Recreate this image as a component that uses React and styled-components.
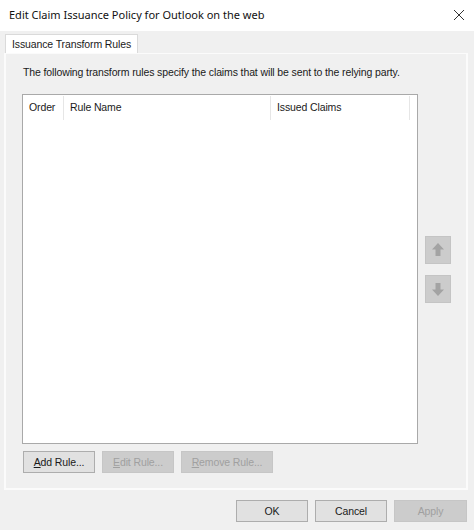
import React from "react";
import styled, { createGlobalStyle } from "styled-components";

const GlobalStyle = createGlobalStyle`
  html, body {
    margin: 0;
    padding: 0;
    background: #f0f0f0;
  }
  body {
    font-family: "Liberation Sans", Arial, sans-serif;
    color: #1a1a1a;
  }
`;

const columns = [
  { label: "Order", width: 41 },
  { label: "Rule Name", width: 207 },
  { label: "Issued Claims", width: 139 },
];

const Arrow = ({ down }) => (
  <svg width="14" height="16" viewBox="0 0 14 16">
    <polygon
      points="7,1 13,7.5 9.5,7.5 9.5,14 4.5,14 4.5,7.5 1,7.5"
      fill="#a3a3a3"
      transform={down ? "rotate(180 7 8)" : undefined}
    />
  </svg>
);

const App = () => {
  return (
    <Window>
      <GlobalStyle />
      <TitleBar>
        <Title>Edit Claim Issuance Policy for Outlook on the web</Title>
        <Close>
          <svg width="12" height="12" viewBox="0 0 12 12">
            <path d="M1 1 L11 11 M11 1 L1 11" stroke="#333" strokeWidth="1" />
          </svg>
        </Close>
      </TitleBar>
      <Body>
        <TabStrip>
          <Tab>Issuance Transform Rules</Tab>
        </TabStrip>
        <Panel>
          <Description>
            The following transform rules specify the claims that will be sent
            to the relying party.
          </Description>
          <ListRow>
            <ListBox>
              <Header>
                {columns.map((c) => (
                  <HeaderCell key={c.label} $width={c.width}>
                    {c.label}
                  </HeaderCell>
                ))}
              </Header>
            </ListBox>
            <ArrowColumn>
              <ArrowButton disabled>
                <Arrow />
              </ArrowButton>
              <ArrowButton disabled>
                <Arrow down />
              </ArrowButton>
            </ArrowColumn>
          </ListRow>
          <RuleButtons>
            <Button $width={72}>
              <u>A</u>dd Rule...
            </Button>
            <Button $width={72} disabled>
              <u>E</u>dit Rule...
            </Button>
            <Button $width={92} disabled>
              <u>R</u>emove Rule...
            </Button>
          </RuleButtons>
        </Panel>
        <Footer>
          <Button $width={72}>OK</Button>
          <Button $width={72}>Cancel</Button>
          <Button $width={73} disabled>
            Apply
          </Button>
        </Footer>
      </Body>
    </Window>
  );
};

export default App;

const Window = styled.div`
  width: 474px;
  height: 530px;
  display: flex;
  flex-direction: column;
  background: #f0f0f0;
  overflow: hidden;
`;

const TitleBar = styled.div`
  height: 31px;
  flex: none;
  display: flex;
  align-items: center;
  justify-content: space-between;
  padding: 0 9px 2px 9px;
  box-sizing: border-box;
  background: #ffffff;
`;

const Title = styled.div`
  font-family: "Noto Sans", "Liberation Sans", sans-serif;
  font-size: 11px;
  color: #111111;
`;

const Close = styled.div`
  display: flex;
  align-items: center;
  margin-right: 0;
`;

const Body = styled.div`
  flex: 1;
  display: flex;
  flex-direction: column;
  padding: 3px 6px 0 4px;
`;

const TabStrip = styled.div`
  display: flex;
  height: 19px;
  padding-left: 1px;
`;

const Tab = styled.div`
  width: 133px;
  box-sizing: border-box;
  background: #ffffff;
  border: 1px solid #dadada;
  border-bottom: none;
  font-size: 10.5px;
  letter-spacing: -0.12px;
  line-height: 18px;
  padding-left: 6px;
  white-space: nowrap;
  color: #1a1a1a;
`;

const Panel = styled.div`
  height: 437px;
  box-sizing: border-box;
  border: 2px solid #fbfbfb;
  border-top-width: 1px;
  background: #f0f0f0;
  display: flex;
  flex-direction: column;
  padding: 11px 0 0 16px;
`;

const Description = styled.div`
  font-size: 10.5px;
  letter-spacing: -0.12px;
  color: #1a1a1a;
  line-height: 14px;
  margin-left: 1px;
  white-space: nowrap;
`;

const ListRow = styled.div`
  display: flex;
  align-items: center;
  gap: 7px;
  margin-top: 15px;
`;

const ListBox = styled.div`
  width: 396px;
  height: 350px;
  box-sizing: border-box;
  background: #ffffff;
  border: 1px solid #a9a9a9;
`;

const Header = styled.div`
  display: flex;
  height: 24px;
  margin-top: 1px;
`;

const HeaderCell = styled.div`
  width: ${(p) => p.$width}px;
  box-sizing: border-box;
  border-right: 1px solid #e6e6e6;
  font-size: 10.5px;
  letter-spacing: -0.12px;
  line-height: 22px;
  padding-left: 6px;
  color: #1a1a1a;
`;

const ArrowColumn = styled.div`
  display: flex;
  flex-direction: column;
  gap: 11px;
`;

const ArrowButton = styled.button`
  width: 26px;
  height: 28px;
  padding: 0;
  display: flex;
  align-items: center;
  justify-content: center;
  background: #cccccc;
  border: 1px solid #c4c4c4;
`;

const RuleButtons = styled.div`
  display: flex;
  gap: 7px;
  margin-top: 7px;
  padding-left: 1px;
`;

const Button = styled.button`
  width: ${(p) => p.$width}px;
  height: 22px;
  padding: 0;
  box-sizing: border-box;
  font-family: "Liberation Sans", Arial, sans-serif;
  font-size: 10.5px;
  letter-spacing: -0.12px;
  color: ${(p) => (p.disabled ? "#a0a0a0" : "#1a1a1a")};
  background: ${(p) => (p.disabled ? "#cccccc" : "#e1e1e1")};
  border: 1px solid ${(p) => (p.disabled ? "#c6c6c6" : "#adadad")};

  u {
    text-decoration-thickness: 1px;
  }
`;

const Footer = styled.div`
  display: flex;
  justify-content: flex-end;
  gap: 7px;
  margin-top: 10px;
  padding-right: 1px;
`;
